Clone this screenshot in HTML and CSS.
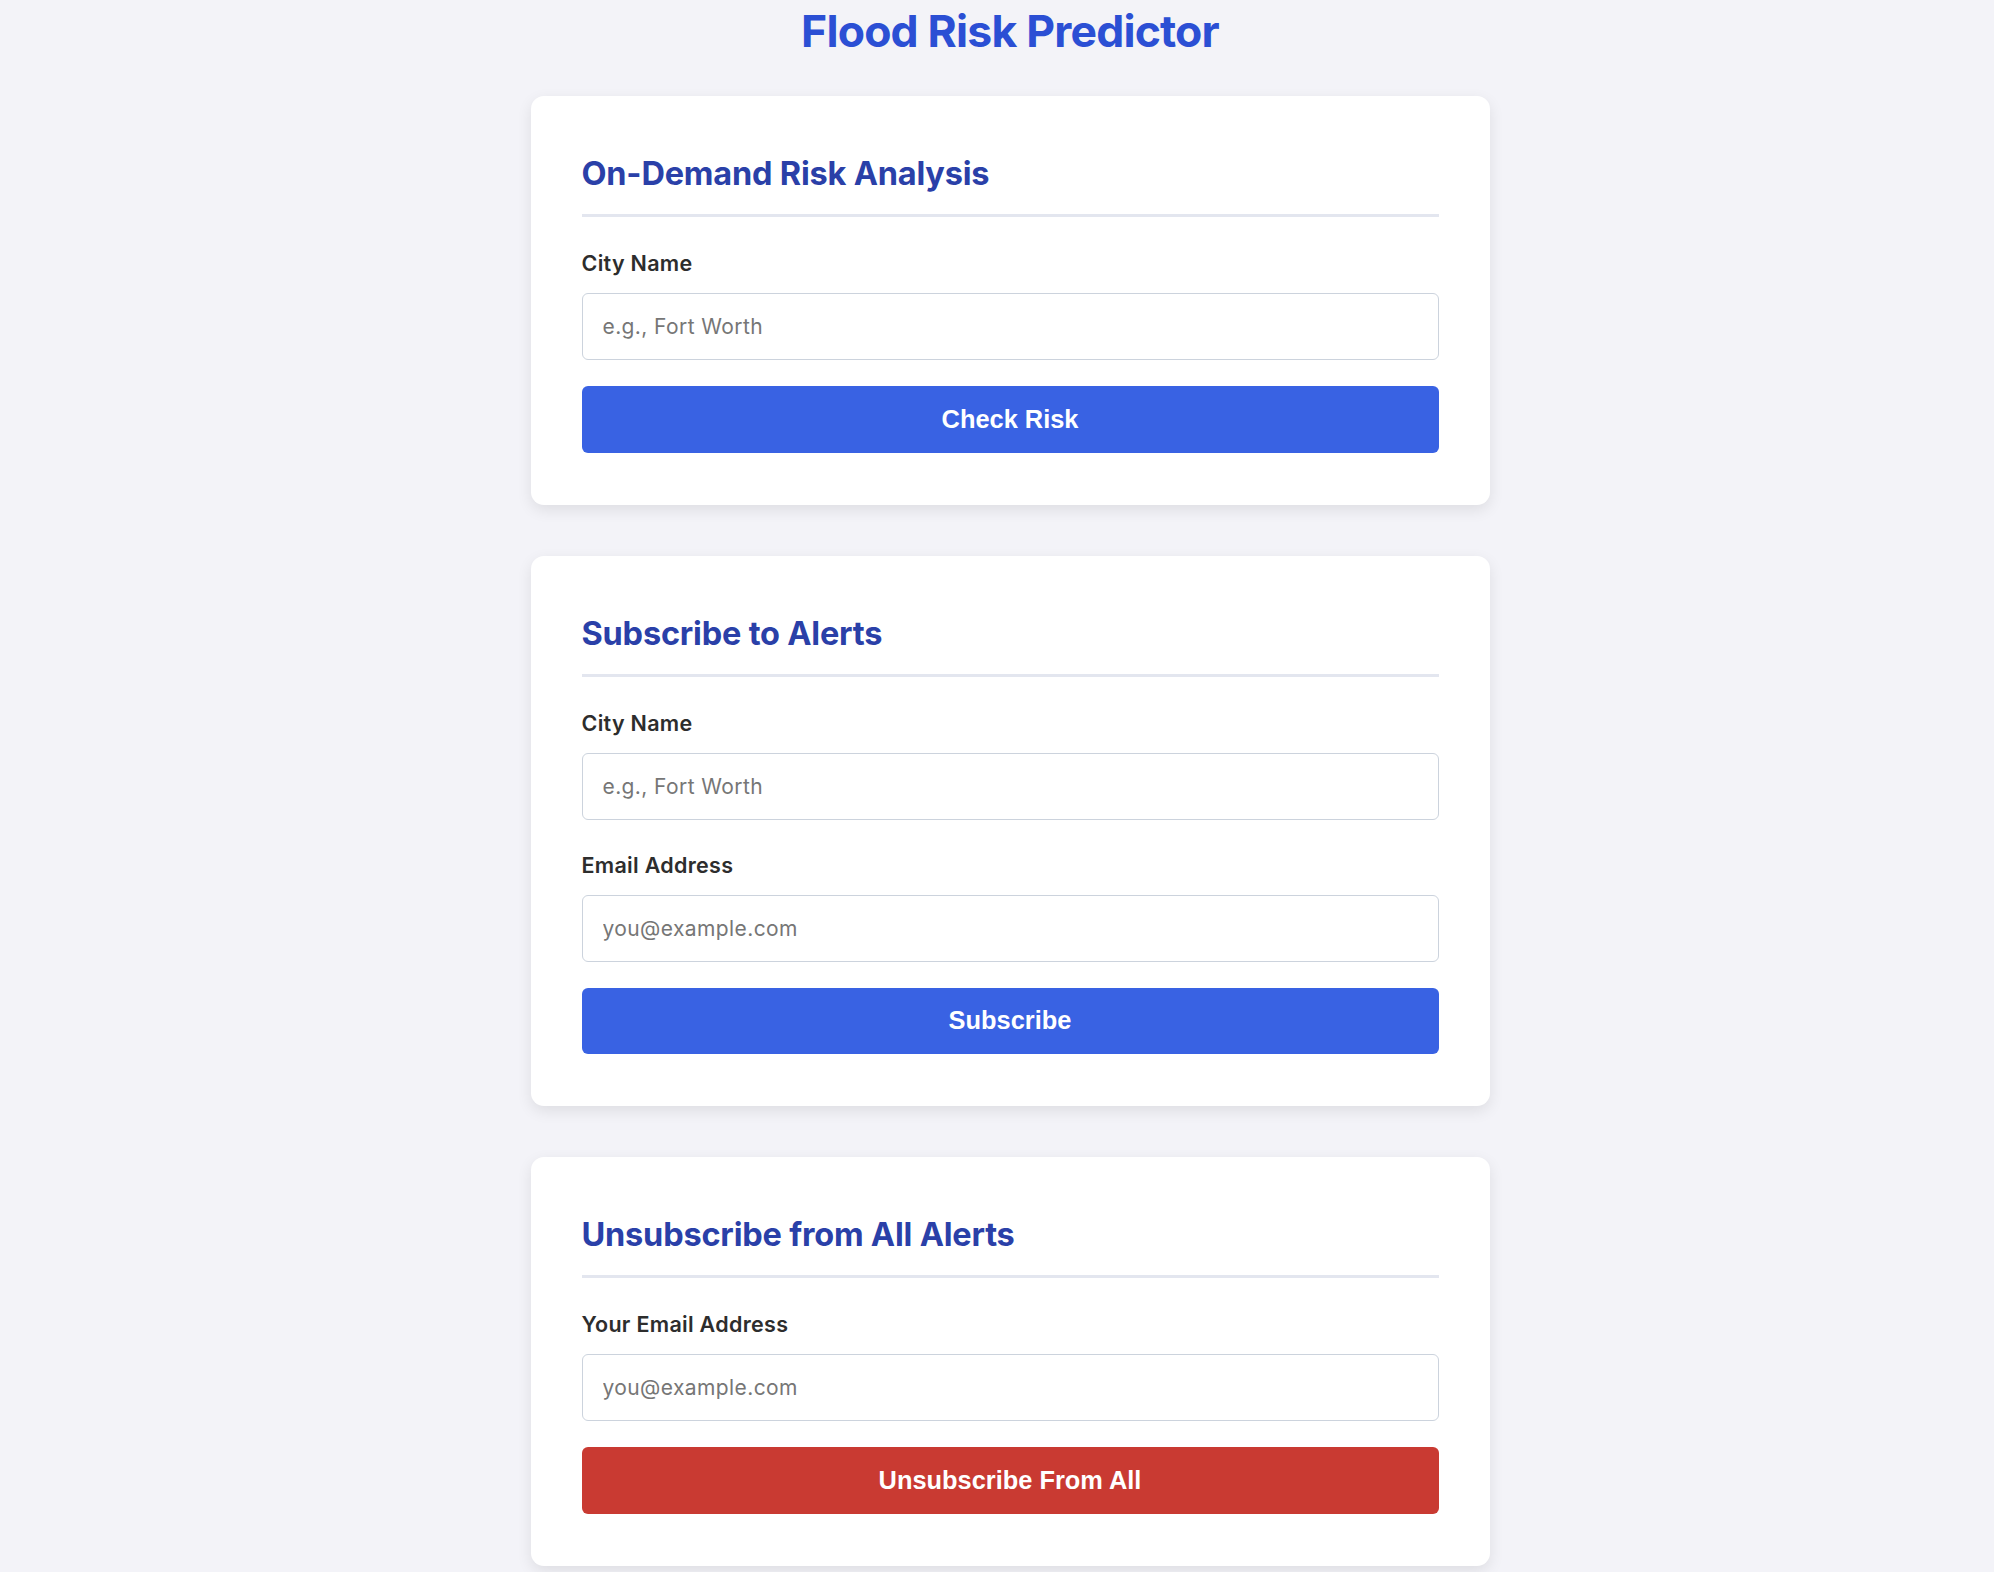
FILE: index.html
```html
<!DOCTYPE html>
<html>
<head>
  <title>Flood Risk Predictor</title>
  <link rel="stylesheet" href="styles.css">
</head>
<body>
  <div class="page">
    <h1>Flood Risk Predictor</h1>

    <div class="card">
      <h2>On-Demand Risk Analysis</h2>
      <form>
        <div class="form-group">
          <label for="risk-city">City Name</label>
          <input type="text" id="risk-city" placeholder="e.g., Fort Worth">
        </div>
        <button type="button" class="btn">Check Risk</button>
      </form>
    </div>

    <div class="card">
      <h2>Subscribe to Alerts</h2>
      <form>
        <div class="form-group">
          <label for="sub-city">City Name</label>
          <input type="text" id="sub-city" placeholder="e.g., Fort Worth">
        </div>
        <div class="form-group">
          <label for="sub-email">Email Address</label>
          <input type="email" id="sub-email" placeholder="you@example.com">
        </div>
        <button type="button" class="btn">Subscribe</button>
      </form>
    </div>

    <div class="card">
      <h2>Unsubscribe from All Alerts</h2>
      <form>
        <div class="form-group">
          <label for="unsub-email">Your Email Address</label>
          <input type="email" id="unsub-email" placeholder="you@example.com">
        </div>
        <button type="button" class="btn btn-danger">Unsubscribe From All</button>
      </form>
    </div>
  </div>
</body>
</html>
```

FILE: styles.css
```css
/* Flood Risk Predictor */

body {
  font-family: Inter, "Noto Sans", sans-serif;
  background-color: #f3f3f8;
  margin: 0;
  padding: 0 0 0 26px;
}

.page {
  max-width: 959px;
  margin: 0 auto;
}

h1 {
  font-size: 44.5px;
  font-weight: 700;
  letter-spacing: -0.8px;
  color: #2b4fd4;
  text-align: center;
  margin: 3.5px 0 38.5px;
}

.card {
  background-color: #fff;
  border-radius: 13px;
  padding: 58px 51px 52px;
  margin-bottom: 51px;
  box-shadow: 0 5px 15px rgba(0, 0, 0, 0.09);
}

h2 {
  font-size: 32.5px;
  font-weight: 700;
  letter-spacing: -0.2px;
  color: #2a40a8;
  margin: 0 0 33px;
  padding-bottom: 21px;
  border-bottom: 3px solid #e3e6ef;
}

.form-group {
  margin-bottom: 26px;
}

.form-group + .form-group {
  margin-top: 32px;
}

label {
  display: block;
  font-size: 21.5px;
  font-weight: 600;
  letter-spacing: 0.3px;
  color: #2d2d2d;
  margin: 0 0 17px;
}

input[type="text"],
input[type="email"] {
  width: 100%;
  box-sizing: border-box;
  padding: 20px;
  border: 1px solid #ccd3dd;
  border-radius: 6px;
  font-family: Inter, "Noto Sans", sans-serif;
  font-size: 21px;
  letter-spacing: 0.4px;
  color: #333;
  background-color: #fff;
}

input::placeholder {
  color: #767676;
}

.btn {
  display: block;
  width: 100%;
  padding: 18.75px 20px;
  border: none;
  border-radius: 6px;
  background-color: #3962e3;
  color: #fff;
  font-family: "Liberation Sans", Arial, sans-serif;
  font-size: 25.4px;
  font-weight: 700;
  cursor: pointer;
}

.btn-danger {
  background-color: #c93a32;
}
```
